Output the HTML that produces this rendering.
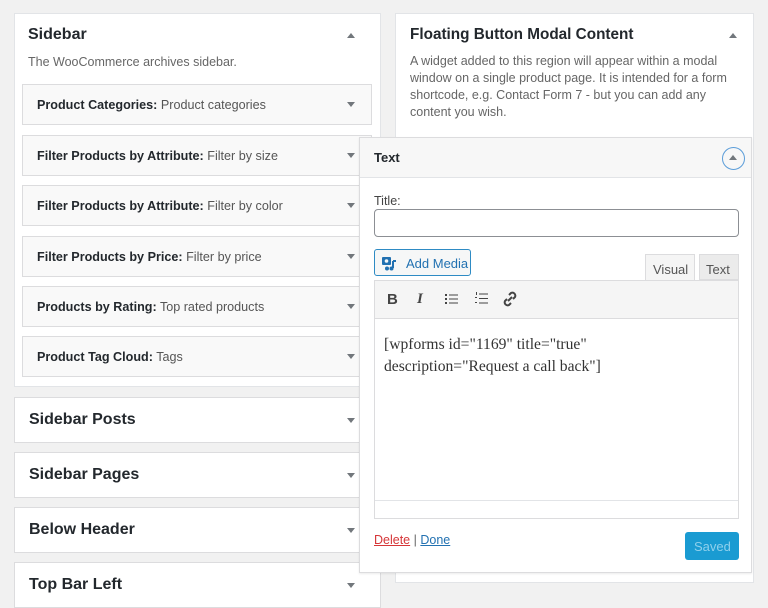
<!DOCTYPE html>
<html><head><style>
*{box-sizing:border-box;margin:0;padding:0}
body{width:768px;height:589px;overflow:hidden;background:#f1f1f1;font-family:"Liberation Sans",sans-serif;color:#23282d;position:relative}
.abs{position:absolute}
.panel{background:#fff;border:1px solid #e2e4e7}
.w{position:absolute;left:22px;width:350px;height:41px;background:#f9f9f9;border:1px solid #dcdcde;font-size:12.6px;padding:13px 14px;color:#23282d}
.w b{font-weight:bold}.w span{color:#555}
.arr{position:absolute;width:0;height:0;border-left:4px solid transparent;border-right:4px solid transparent;border-top:5px solid #72777c}
.arru{position:absolute;width:0;height:0;border-left:4px solid transparent;border-right:4px solid transparent;border-bottom:5px solid #72777c}
.sb{position:absolute;left:14px;width:367px;background:#fff;border:1px solid #dcdcde;font-size:16px;font-weight:bold;padding:13px 14px}
</style></head><body>
<div class="abs panel" style="left:14px;top:13px;width:367px;height:374px"></div>
<div class="abs" style="left:28px;top:26px;font-size:16px;font-weight:bold">Sidebar</div>
<div class="arru" style="left:347px;top:33px"></div>
<div class="abs" style="left:28px;top:55px;font-size:12.5px;color:#666">The WooCommerce archives sidebar.</div>
<div class="w" style="top:84px"><b>Product Categories:</b> <span>Product categories</span></div>
<div class="w" style="top:135px"><b>Filter Products by Attribute:</b> <span>Filter by size</span></div>
<div class="w" style="top:185px"><b>Filter Products by Attribute:</b> <span>Filter by color</span></div>
<div class="w" style="top:236px"><b>Filter Products by Price:</b> <span>Filter by price</span></div>
<div class="w" style="top:286px"><b>Products by Rating:</b> <span>Top rated products</span></div>
<div class="w" style="top:336px"><b>Product Tag Cloud:</b> <span>Tags</span></div>
<div class="arr" style="left:347px;top:102px"></div><div class="arr" style="left:347px;top:153px"></div><div class="arr" style="left:347px;top:203px"></div><div class="arr" style="left:347px;top:254px"></div><div class="arr" style="left:347px;top:304px"></div><div class="arr" style="left:347px;top:354px"></div>
<div class="sb" style="top:397px;height:46px">Sidebar Posts</div>
<div class="sb" style="top:452px;height:46px">Sidebar Pages</div>
<div class="sb" style="top:507px;height:46px">Below Header</div>
<div class="sb" style="top:562px;height:46px">Top Bar Left</div>
<div class="arr" style="left:347px;top:418px"></div><div class="arr" style="left:347px;top:473px"></div><div class="arr" style="left:347px;top:528px"></div><div class="arr" style="left:347px;top:583px"></div>

<div class="abs panel" style="left:395px;top:13px;width:359px;height:570px"></div>
<div class="abs" style="left:410px;top:26px;font-size:15.3px;font-weight:bold">Floating Button Modal Content</div>
<div class="arru" style="left:729px;top:33px"></div>
<div class="abs" style="left:410px;top:53px;width:335px;font-size:12.5px;line-height:17px;color:#666">A widget added to this region will appear within a modal window on a single product page. It is intended for a form shortcode, e.g. Contact Form 7 - but you can add any content you wish.</div>

<div class="abs" style="left:359px;top:137px;width:393px;height:436px;background:#fff;border:1px solid #dcdcde;box-shadow:0 1px 2px rgba(0,0,0,.08)">
 <div style="height:40px;background:#f7f7f7;border-bottom:1px solid #e2e4e7;font-size:13px;font-weight:bold;padding:12px 14px">Text</div>
 <div class="abs" style="left:362px;top:9px;width:23px;height:23px;border:1.5px solid #5b9dd9;border-radius:50%"></div>
 <div class="arru" style="left:369px;top:17px"></div>
 <div class="abs" style="left:14px;top:56px;font-size:12.5px;color:#444">Title:</div>
 <div class="abs" style="left:14px;top:71px;width:365px;height:28px;border:1px solid #8c8f94;border-radius:4px"></div>
 <div class="abs" style="left:14px;top:111px;width:97px;height:27px;border:1px solid #2e8bc4;border-radius:3px;background:#f6f7f7;color:#2271b1;font-size:13px;padding:6px 0 0 31px">Add Media</div>
 <svg class="abs" style="left:22px;top:118px" width="16" height="15" viewBox="0 0 16 15"><rect x="0" y="1" width="9" height="8" rx="1" fill="#2271b1"/><circle cx="4.5" cy="5" r="1.8" fill="#f6f7f7"/><path d="M11 5v7M11 5h3" stroke="#2271b1" stroke-width="2"/><circle cx="9.5" cy="12.5" r="2" fill="#2271b1"/><circle cx="5" cy="12.5" r="2" fill="#2271b1"/></svg>
 <div class="abs" style="left:285px;top:116px;width:50px;height:27px;background:#f5f5f5;border:1px solid #dcdcde;border-bottom:none;font-size:13px;color:#555;padding:7px 0 0 7px">Visual</div>
 <div class="abs" style="left:339px;top:116px;width:40px;height:26px;background:#ebebeb;border:1px solid #dcdcde;font-size:13px;color:#555;padding:7px 0 0 6px">Text</div>
 <div class="abs" style="left:14px;top:142px;width:365px;height:239px;border:1px solid #dcdcde"></div>
 <div class="abs" style="left:15px;top:143px;width:363px;height:38px;background:#f5f5f5;border-bottom:1px solid #dcdcde"></div>
 <div class="abs" style="left:27px;top:153px;font-size:15px;font-weight:bold;color:#444">B</div>
 <div class="abs" style="left:57px;top:153px;font-size:15px;font-style:italic;font-family:'Liberation Serif',serif;font-weight:bold;color:#444">I</div>
 <svg class="abs" style="left:85px;top:155px" width="14" height="12"><g fill="#444"><rect x="0" y="1" width="2" height="2"/><rect x="0" y="5" width="2" height="2"/><rect x="0" y="9" width="2" height="2"/><rect x="4" y="1.5" width="9" height="1"/><rect x="4" y="5.5" width="9" height="1"/><rect x="4" y="9.5" width="9" height="1"/></g></svg>
 <svg class="abs" style="left:115px;top:154px" width="14" height="13"><g fill="#444"><rect x="1" y="0" width="1" height="3"/><rect x="0" y="5" width="2" height="1"/><rect x="0" y="10" width="2" height="1"/><rect x="4" y="1.5" width="9" height="1"/><rect x="4" y="6" width="9" height="1"/><rect x="4" y="10.5" width="9" height="1"/></g></svg>
 <svg class="abs" style="left:142px;top:153px" width="16" height="16" viewBox="0 0 16 16"><g fill="none" stroke="#444" stroke-width="2"><path d="M7 4l2-2a3 3 0 0 1 4 4l-2 2"/><path d="M9 12l-2 2a3 3 0 0 1-4-4l2-2"/><path d="M6 10l4-4"/></g></svg>
 <div class="abs" style="left:24px;top:196px;font-family:'Liberation Serif',serif;font-size:15.6px;line-height:22px;color:#333">[wpforms id="1169" title="true"<br>description="Request a call back"]</div>
 <div class="abs" style="left:15px;top:362px;width:363px;height:18px;border-top:1px solid #e2e4e7"></div>
 <div class="abs" style="left:14px;top:395px;font-size:12.5px"><span style="color:#d63638;text-decoration:underline">Delete</span> <span style="color:#666">|</span> <span style="color:#2271b1;text-decoration:underline">Done</span></div>
 <div class="abs" style="left:325px;top:394px;width:54px;height:28px;background:#1a9bd2;border-radius:3px;color:#8fd0ec;font-size:13px;padding:7px 0 0 9px">Saved</div>
</div>
</body></html>
